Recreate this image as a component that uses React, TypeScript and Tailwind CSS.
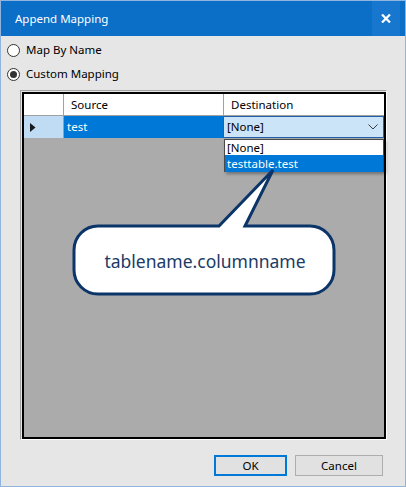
import React from "react";

const uiFont = { fontFamily: '"Noto Sans", "Liberation Sans", sans-serif' };

function Radio({ checked, label }: { checked?: boolean; label: string }) {
  return (
    <div className="flex items-center h-[24px] pl-[6px] gap-[6px]">
      <div className="w-[13px] h-[13px] rounded-full border border-[#333333] bg-white flex items-center justify-center">
        {checked && <div className="w-[7px] h-[7px] rounded-full bg-[#333333]" />}
      </div>
      <span className="text-[11.5px] text-black leading-none">{label}</span>
    </div>
  );
}

function Chevron() {
  return (
    <svg width="10" height="6" viewBox="0 0 10 6" className="block">
      <path d="M0.5 0.5 L5 5 L9.5 0.5" fill="none" stroke="#3c3c3c" strokeWidth="1" />
    </svg>
  );
}

export default function App() {
  return (
    <div
      className="relative w-[406px] h-[487px] flex flex-col bg-[#e6e6e6] border border-[#8fb5df] overflow-hidden"
      style={uiFont}
    >
      {/* Title bar */}
      <div className="h-[35px] flex items-stretch bg-[#0c6fc7] shrink-0">
        <div className="flex-1 flex items-center pl-[14px] text-[11.5px] text-white">Append Mapping</div>
        <div className="w-[28px] mr-[5px] bg-[#1777ce] flex items-center justify-center">
          <svg width="10" height="9" viewBox="0 0 10 9">
            <path d="M1 0.5 L9 8.5 M9 0.5 L1 8.5" stroke="white" strokeWidth="2.2" />
          </svg>
        </div>
      </div>

      {/* Mode options */}
      <div className="pt-[2px] flex flex-col">
        <Radio label="Map By Name" />
        <Radio checked label="Custom Mapping" />
      </div>

      {/* Mapping grid */}
      <div className="mt-[4px] ml-[19px] w-[367px] h-[350px] shrink-0 border border-l-[#a0a0a0] border-t-[#a0a0a0] border-r-white border-b-white pl-[1px] pt-[1px]">
        <div className="relative w-full h-full border-2 border-black bg-[#ababab] flex flex-col">
          {/* Header row */}
          <div className="h-[22px] flex bg-white border-b border-[#a0a0a0] text-[11.5px] text-black">
            <div className="w-[40px] border-r border-[#a0a0a0]" />
            <div className="w-[160px] border-r border-[#a0a0a0] flex items-center pl-[7px]">Source</div>
            <div className="flex-1 flex items-center pl-[7px]">Destination</div>
          </div>
          {/* Data row */}
          <div className="h-[22px] flex text-[11.5px]">
            <div className="w-[40px] bg-[#bfdcf4] border-r border-[#a0a0a0] flex items-center pl-[6px]">
              <svg width="6" height="9" viewBox="0 0 6 9">
                <path d="M0 0 L5.5 4.5 L0 9 Z" fill="#1a1a1a" />
              </svg>
            </div>
            <div className="w-[159px] bg-[#0078d7] text-white flex items-center pl-[3px]">test</div>
            <div className="flex-1 bg-[#cce4f7] border border-[#2260a8] flex items-center justify-between pl-[3px] pr-[5px] text-black">
              <span>[None]</span>
              <Chevron />
            </div>
          </div>
          {/* Open dropdown list */}
          <div className="absolute left-[200px] top-[45px] w-[160px] h-[33px] border border-[#4a4a4a] bg-white text-[11.5px] shadow-[2px_2px_3px_rgba(0,0,0,0.35)] flex flex-col">
            <div className="h-[15px] flex items-center pl-[2px] text-black">[None]</div>
            <div className="flex-1 flex items-center pl-[2px] bg-[#0078d7] text-white">testtable.test</div>
          </div>
        </div>
      </div>

      {/* Buttons */}
      <div className="mt-[15px] flex justify-end gap-[8px] mr-[22px] text-[11.5px] text-black">
        <button className="w-[73px] h-[21px] border-2 border-[#0078d7] bg-[#e1e1e1] flex items-center justify-center">
          OK
        </button>
        <button className="w-[88px] h-[21px] border border-[#adadad] bg-[#e1e1e1] flex items-center justify-center">
          Cancel
        </button>
      </div>

      {/* Callout annotation */}
      <svg
        className="absolute left-[-1px] top-[-1px] pointer-events-none"
        width="406"
        height="487"
        viewBox="0 0 406 487"
      >
        <path
          d="M98 226 L219 226 L273 170 L245 226 L310 226 A24 24 0 0 1 334 250 L334 270 A24 24 0 0 1 310 294 L98 294 A24 24 0 0 1 74 270 L74 250 A24 24 0 0 1 98 226 Z"
          fill="white"
          stroke="#0b3468"
          strokeWidth="3"
          strokeLinejoin="miter"
        />
      </svg>
      <div className="absolute left-[73px] top-[225px] w-[262px] h-[70px] flex items-center justify-center text-[17.5px] text-[#1b3a66] pointer-events-none">
        tablename.columnname
      </div>
    </div>
  );
}
